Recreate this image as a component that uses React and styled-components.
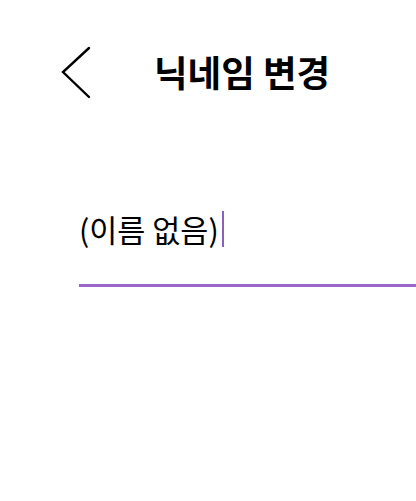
import React, {useState} from "react"
import styled, {createGlobalStyle} from "styled-components"

const GlobalStyle = createGlobalStyle`
    html, body {
        margin: 0;
        padding: 0;
        background: #ffffff;
    }
    body {
        font-family: "Noto Sans CJK KR", "Noto Sans", sans-serif;
        color: #000000;
    }
`

function BackIcon() {
    return (
        <svg width="32" height="54" viewBox="0 0 32 54" fill="none">
            <polyline points="29,3 3,27 29,52" stroke="#000" strokeWidth="2.4" strokeLinecap="round" strokeLinejoin="miter" />
        </svg>
    )
}

function App() {
    const [name] = useState("(이름 없음)")

    return (
        <>
            <GlobalStyle />
            <Page>
                <Header>
                    <BackButton aria-label="back"><BackIcon /></BackButton>
                    <Title>닉네임 변경</Title>
                </Header>
                <Field>
                    <TextRow>
                        <Value>{name}</Value>
                        <Caret />
                    </TextRow>
                    <Underline />
                </Field>
            </Page>
        </>
    )
}

export default App

const Page = styled.div`
    width: 416px;
    height: 501px;
    overflow: hidden;
    background: #fff;
`

const Header = styled.header`
    display: flex;
    align-items: center;
    height: 54px;
    padding: 45px 0 0 60px;
`

const BackButton = styled.button`
    display: flex;
    align-items: center;
    padding: 0;
    border: none;
    background: transparent;
    cursor: pointer;
    width: 32px;
    height: 54px;
`

const Title = styled.h1`
    margin: 0 0 0 62px;
    font-size: 36.5px;
    font-weight: 700;
    line-height: 1;
    letter-spacing: 0;
`

const Field = styled.div`
    margin: 110px 0 0 79px;
`

const TextRow = styled.div`
    display: flex;
    align-items: center;
    height: 40px;
`

const Value = styled.span`
    font-size: 30.5px;
    line-height: 1;
`

const Caret = styled.span`
    width: 2px;
    height: 36px;
    margin-left: 3px;
    background: #8a5fc0;
`

const Underline = styled.div`
    margin-top: 35px;
    height: 3px;
    background: #9966cc;
`
